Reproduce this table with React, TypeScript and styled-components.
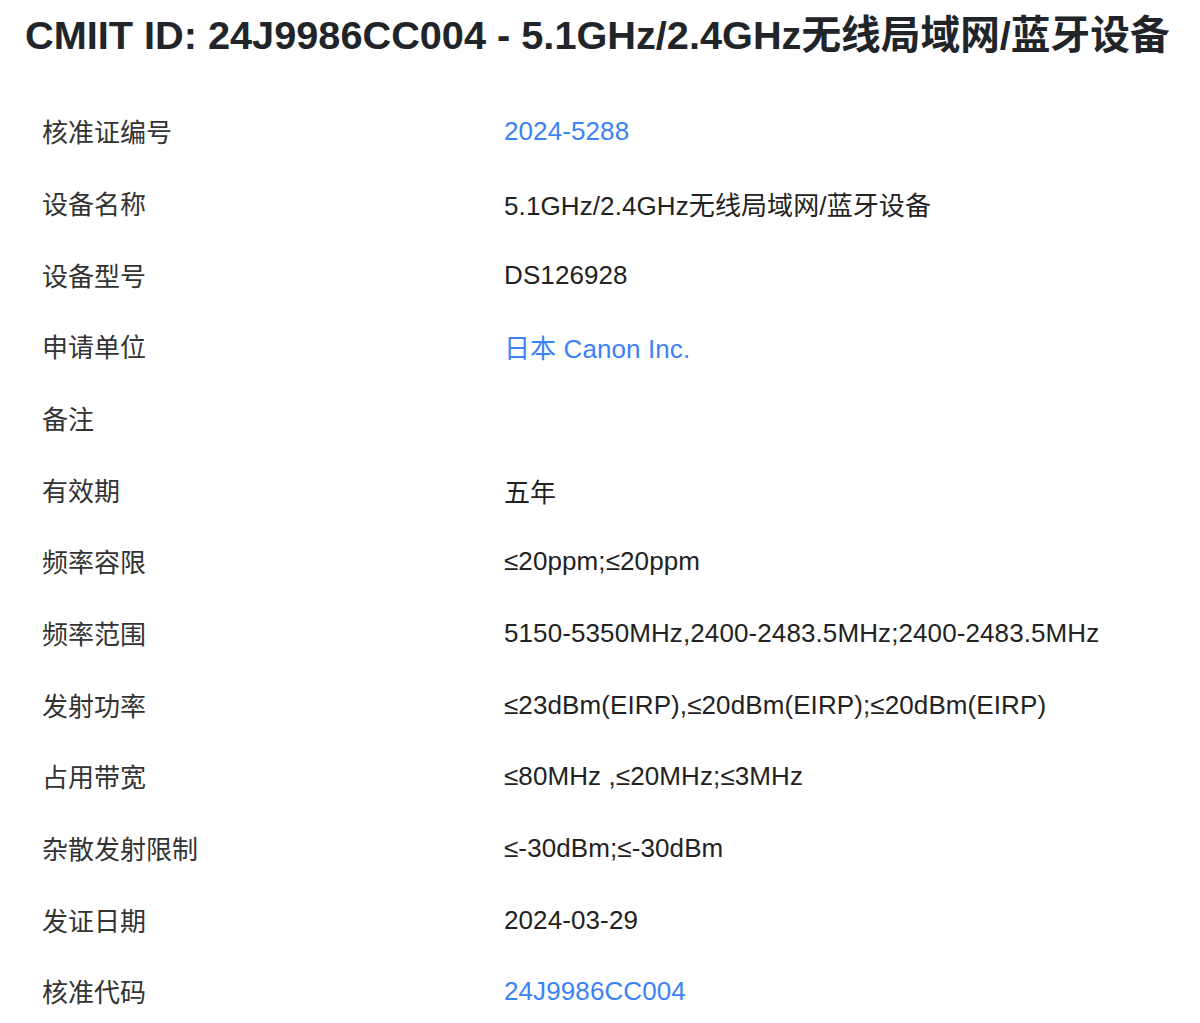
import React from "react";
import styled, { createGlobalStyle } from "styled-components";

const Global = createGlobalStyle`
  html, body { margin: 0; padding: 0; background: #ffffff; }
  body { font-family: "Liberation Sans", "Noto Sans CJK SC", sans-serif; }
`;

const Page = styled.div`
  padding: 10px 0 0 25px;
  width: 1200px;
  box-sizing: border-box;
`;

const Title = styled.h1`
  margin: 0;
  font-size: 39.7px;
  line-height: 50px;
  font-weight: 700;
  color: #212529;
  white-space: nowrap;
`;

const Table = styled.div`
  margin-top: 35px;
  display: flex;
  flex-direction: column;
`;

const Row = styled.div`
  display: grid;
  grid-template-columns: 479px 1fr;
  height: 71.67px;
  align-items: center;
  font-size: 26px;
`;

const Label = styled.div`
  padding-left: 17px;
  color: #333333;
`;

const Value = styled.div<{ $link?: boolean }>`
  padding-top: 2px;
  color: ${(p) => (p.$link ? "#3b82f6" : "#222222")};
  white-space: nowrap;
  letter-spacing: 0.1px;
`;

const rows: { label: string; value: string; link?: boolean }[] = [
  { label: "核准证编号", value: "2024-5288", link: true },
  { label: "设备名称", value: "5.1GHz/2.4GHz无线局域网/蓝牙设备" },
  { label: "设备型号", value: "DS126928" },
  { label: "申请单位", value: "日本 Canon Inc.", link: true },
  { label: "备注", value: "" },
  { label: "有效期", value: "五年" },
  { label: "频率容限", value: "≤20ppm;≤20ppm" },
  { label: "频率范围", value: "5150-5350MHz,2400-2483.5MHz;2400-2483.5MHz" },
  { label: "发射功率", value: "≤23dBm(EIRP),≤20dBm(EIRP);≤20dBm(EIRP)" },
  { label: "占用带宽", value: "≤80MHz ,≤20MHz;≤3MHz" },
  { label: "杂散发射限制", value: "≤-30dBm;≤-30dBm" },
  { label: "发证日期", value: "2024-03-29" },
  { label: "核准代码", value: "24J9986CC004", link: true },
];

export default function App() {
  return (
    <>
      <Global />
      <Page>
        <Title>CMIIT ID: 24J9986CC004 - 5.1GHz/2.4GHz无线局域网/蓝牙设备</Title>
        <Table>
          {rows.map((r) => (
            <Row key={r.label}>
              <Label>{r.label}</Label>
              <Value $link={r.link}>{r.value}</Value>
            </Row>
          ))}
        </Table>
      </Page>
    </>
  );
}
